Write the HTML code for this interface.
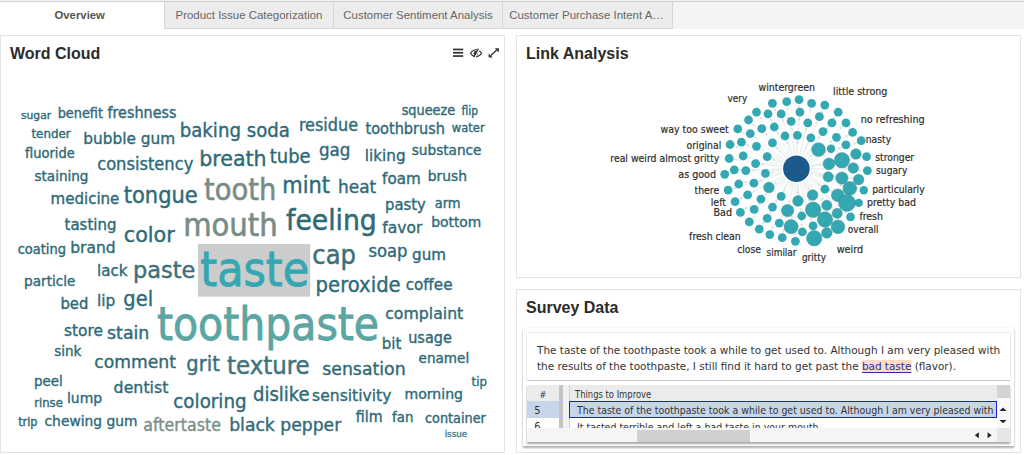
<!DOCTYPE html>
<html lang="en">
<head>
<meta charset="utf-8">
<title>Toothpaste Survey Text Analytics</title>
<style>
html,body{margin:0;padding:0}
body{width:1024px;height:455px;overflow:hidden;background:#fff;position:relative;font-family:"Liberation Sans",sans-serif;color:#333}
.tabbar{position:absolute;left:0;top:0;width:1024px;height:29px;background:#f4f4f4;box-sizing:border-box;border-top:1px solid #f0f0f0}
.tabbar:before{content:"";position:absolute;left:0;top:0;width:1024px;height:1px;background:#d2d2d2}
.tab{position:absolute;top:1px;height:27px;box-sizing:border-box;background:#ececec;border:1px solid #d6d6d6;border-top:none;border-left:none;font-size:11.45px;line-height:27px;text-align:center;color:#666;white-space:nowrap;overflow:hidden}
.tab span{position:relative;top:0.3px}
.tab.active{background:#fff;border:none;height:34px;font-weight:bold;color:#555;font-size:11.35px}
.panel{position:absolute;box-sizing:border-box;border:1px solid #e4e4e4;background:#fff}
.panel h2{position:absolute;margin:0;left:8px;top:8px;font-size:16px;line-height:20px;font-weight:bold;color:#2b2b2b;white-space:nowrap}
svg{position:absolute;left:0;top:0;overflow:visible}
svg text{font-family:"DejaVu Sans Condensed","DejaVu Sans","Liberation Sans",sans-serif}
.tools{position:absolute;left:0;top:0}
.sv{font-family:"DejaVu Sans Condensed","DejaVu Sans","Liberation Sans",sans-serif;color:#333}
.outer{position:absolute;left:523px;top:328px;width:491px;height:118px;background:#fff;box-shadow:0 1.5px 2px rgba(0,0,0,.32),0 0 1px rgba(0,0,0,.15)}
.note{position:absolute;left:527px;top:333px;width:483px;height:47px;background:#fff;box-shadow:0 1px 0 #c9c9c9,0 0 1.5px rgba(0,0,0,.28);box-sizing:border-box}
.note p{position:absolute;margin:0;left:9.5px;white-space:nowrap;font-size:11.25px;line-height:16px;transform-origin:0 0;transform:scaleX(1.035)}
.hl{background:linear-gradient(#fddcc0,#fddcc0) no-repeat 0 0/100% 12px;color:#2c2cac;text-decoration:underline;text-decoration-thickness:1.1px;text-underline-offset:1.6px}
.grid{position:absolute;left:527px;top:385px;width:483px;height:57px;background:#fff;box-shadow:0 1.5px 2px rgba(0,0,0,.35);overflow:hidden}
.grid div{position:absolute;box-sizing:border-box}
.grid .t{white-space:nowrap;transform-origin:0 0}
</style>
</head>
<body>
<div class="tabbar">
  <div class="tab active" style="left:0;width:164px"><span style="left:-2.3px;top:-0.4px">Overview</span></div>
  <div class="tab" style="left:164px;width:170px;border-left:1px solid #d6d6d6"><span>Product Issue Categorization</span></div>
  <div class="tab" style="left:334px;width:169px"><span>Customer Sentiment Analysis</span></div>
  <div class="tab" style="left:503px;width:170px"><span style="left:-1px">Customer Purchase Intent A…</span></div>
</div>

<div class="panel" style="left:0;top:35px;width:505px;height:418px"><h2 style="left:9px">Word Cloud</h2></div>
<div class="panel" style="left:516px;top:35px;width:505px;height:243px"><h2 style="left:9px">Link Analysis</h2></div>
<div class="panel" style="left:516px;top:289px;width:505px;height:164px"><h2 style="left:9px">Survey Data</h2></div>

<svg class="tools" width="1024" height="70" viewBox="0 0 1024 70">
  <g fill="#333">
    <rect x="453" y="48.6" width="10.2" height="1.7"/>
    <rect x="453" y="51.9" width="10.2" height="1.7"/>
    <rect x="453" y="55.2" width="10.2" height="1.7"/>
  </g>
  <g fill="none" stroke="#333" stroke-width="1.05">
    <path d="M470.5 53.2 C472.6 50 474.6 49.7 476 49.7 C477.6 49.7 479.6 50.2 481.6 53.2 C479.6 56.2 477.6 56.7 476 56.7 C474.6 56.7 472.6 56.4 470.5 53.2Z"/>
  </g>
  <circle cx="475.8" cy="53.2" r="2.2" fill="#333"/>
  <path d="M479.6 48.9 L474.9 57.6" stroke="#fff" stroke-width="1.1" fill="none"/>
  <path d="M478.4 48.6 L473.7 57.3" stroke="#333" stroke-width="1.1" fill="none"/>
  <g fill="#333" stroke="#333">
    <path d="M490.8 55.6 L496.7 50.1" stroke-width="1.35" fill="none"/>
    <path d="M494.7 48.2 H498.9 V52.4Z" stroke="none"/>
    <path d="M488.6 53.4 V57.6 H492.8Z" stroke="none"/>
  </g>
</svg>

<svg width="1024" height="455" viewBox="0 0 1024 455">
  <rect x="198" y="244" width="112.2" height="52.6" fill="#cccccc"/>
  <g stroke-width="0.3">
<text stroke="#2f6a78" x="20.95" y="119.10" font-size="11.37" textLength="30.29" lengthAdjust="spacingAndGlyphs" fill="#2f6a78" stroke-width="0.36">sugar</text>
<text stroke="#2f6a78" x="57.68" y="118.30" font-size="13.60" textLength="45.36" lengthAdjust="spacingAndGlyphs" fill="#2f6a78" stroke-width="0.36">benefit</text>
<text stroke="#2f6a78" x="107.51" y="117.50" font-size="15.20" textLength="69.08" lengthAdjust="spacingAndGlyphs" fill="#2f6a78" stroke-width="0.36">freshness</text>
<text stroke="#2f6a78" x="401.66" y="115.10" font-size="13.59" textLength="53.54" lengthAdjust="spacingAndGlyphs" fill="#2f6a78" stroke-width="0.36">squeeze</text>
<text stroke="#2f6a78" x="461.49" y="114.90" font-size="12.10" textLength="16.47" lengthAdjust="spacingAndGlyphs" fill="#2f6a78" stroke-width="0.36">flip</text>
<text stroke="#2f6a78" x="31.47" y="138.00" font-size="12.52" textLength="39.17" lengthAdjust="spacingAndGlyphs" fill="#2f6a78" stroke-width="0.36">tender</text>
<text stroke="#2f6a78" x="83.37" y="143.80" font-size="16.18" textLength="91.83" lengthAdjust="spacingAndGlyphs" fill="#2f6a78" stroke-width="0.36">bubble gum</text>
<text stroke="#2f6a78" x="179.72" y="136.80" font-size="19.16" textLength="110.19" lengthAdjust="spacingAndGlyphs" fill="#2f6a78" stroke-width="0.36">baking soda</text>
<text stroke="#2f6a78" x="298.90" y="131.40" font-size="16.95" textLength="59.15" lengthAdjust="spacingAndGlyphs" fill="#2f6a78" stroke-width="0.36">residue</text>
<text stroke="#2f6a78" x="365.51" y="134.30" font-size="15.33" textLength="79.50" lengthAdjust="spacingAndGlyphs" fill="#2f6a78" stroke-width="0.36">toothbrush</text>
<text stroke="#2f6a78" x="451.84" y="131.80" font-size="12.19" textLength="32.89" lengthAdjust="spacingAndGlyphs" fill="#2f6a78" stroke-width="0.36">water</text>
<text stroke="#2f6a78" x="25.04" y="158.00" font-size="13.77" textLength="49.76" lengthAdjust="spacingAndGlyphs" fill="#2f6a78" stroke-width="0.36">fluoride</text>
<text stroke="#2f6a78" x="97.21" y="169.90" font-size="17.20" textLength="96.07" lengthAdjust="spacingAndGlyphs" fill="#2f6a78" stroke-width="0.36">consistency</text>
<text stroke="#2f6a78" x="199.21" y="166.20" font-size="21.74" textLength="67.45" lengthAdjust="spacingAndGlyphs" fill="#2f6a78" stroke-width="0.39">breath</text>
<text stroke="#2f6a78" x="269.73" y="163.20" font-size="18.98" textLength="40.91" lengthAdjust="spacingAndGlyphs" fill="#2f6a78" stroke-width="0.36">tube</text>
<text stroke="#2f6a78" x="318.99" y="156.40" font-size="17.66" textLength="31.50" lengthAdjust="spacingAndGlyphs" fill="#2f6a78" stroke-width="0.36">gag</text>
<text stroke="#2f6a78" x="364.88" y="161.00" font-size="16.05" textLength="40.77" lengthAdjust="spacingAndGlyphs" fill="#2f6a78" stroke-width="0.36">liking</text>
<text stroke="#2f6a78" x="411.72" y="154.90" font-size="14.41" textLength="69.81" lengthAdjust="spacingAndGlyphs" fill="#2f6a78" stroke-width="0.36">substance</text>
<text stroke="#2f6a78" x="34.43" y="180.60" font-size="14.33" textLength="54.07" lengthAdjust="spacingAndGlyphs" fill="#2f6a78" stroke-width="0.36">staining</text>
<text stroke="#2f6a78" x="50.49" y="204.20" font-size="15.89" textLength="68.91" lengthAdjust="spacingAndGlyphs" fill="#2f6a78" stroke-width="0.36">medicine</text>
<text stroke="#2f6a78" x="123.78" y="202.60" font-size="22.18" textLength="73.99" lengthAdjust="spacingAndGlyphs" fill="#2f6a78" stroke-width="0.40">tongue</text>
<text stroke="#788d85" x="203.91" y="200.20" font-size="29.96" textLength="72.41" lengthAdjust="spacingAndGlyphs" fill="#788d85" stroke-width="0.54">tooth</text>
<text stroke="#2f6a78" x="282.29" y="192.90" font-size="22.14" textLength="47.76" lengthAdjust="spacingAndGlyphs" fill="#2f6a78" stroke-width="0.40">mint</text>
<text stroke="#2f6a78" x="338.02" y="193.10" font-size="17.89" textLength="38.18" lengthAdjust="spacingAndGlyphs" fill="#2f6a78" stroke-width="0.36">heat</text>
<text stroke="#2f6a78" x="382.09" y="183.80" font-size="15.98" textLength="38.59" lengthAdjust="spacingAndGlyphs" fill="#2f6a78" stroke-width="0.36">foam</text>
<text stroke="#2f6a78" x="427.80" y="180.90" font-size="14.62" textLength="39.25" lengthAdjust="spacingAndGlyphs" fill="#2f6a78" stroke-width="0.36">brush</text>
<text stroke="#2f6a78" x="64.60" y="230.20" font-size="15.80" textLength="51.82" lengthAdjust="spacingAndGlyphs" fill="#2f6a78" stroke-width="0.36">tasting</text>
<text stroke="#2f6a78" x="123.72" y="241.50" font-size="21.91" textLength="51.09" lengthAdjust="spacingAndGlyphs" fill="#2f6a78" stroke-width="0.40">color</text>
<text stroke="#788d85" x="183.15" y="236.20" font-size="31.96" textLength="94.59" lengthAdjust="spacingAndGlyphs" fill="#788d85" stroke-width="0.58">mouth</text>
<text stroke="#2f6a78" x="286.02" y="230.20" font-size="28.97" textLength="90.78" lengthAdjust="spacingAndGlyphs" fill="#2f6a78" stroke-width="0.52">feeling</text>
<text stroke="#2f6a78" x="385.01" y="210.00" font-size="15.66" textLength="40.83" lengthAdjust="spacingAndGlyphs" fill="#2f6a78" stroke-width="0.36">pasty</text>
<text stroke="#2f6a78" x="434.70" y="207.50" font-size="13.84" textLength="25.94" lengthAdjust="spacingAndGlyphs" fill="#2f6a78" stroke-width="0.36">arm</text>
<text stroke="#2f6a78" x="382.29" y="232.80" font-size="16.38" textLength="40.01" lengthAdjust="spacingAndGlyphs" fill="#2f6a78" stroke-width="0.36">favor</text>
<text stroke="#2f6a78" x="431.20" y="227.00" font-size="14.63" textLength="50.10" lengthAdjust="spacingAndGlyphs" fill="#2f6a78" stroke-width="0.36">bottom</text>
<text stroke="#2f6a78" x="17.65" y="254.30" font-size="13.76" textLength="48.40" lengthAdjust="spacingAndGlyphs" fill="#2f6a78" stroke-width="0.36">coating</text>
<text stroke="#2f6a78" x="70.25" y="253.30" font-size="16.38" textLength="45.42" lengthAdjust="spacingAndGlyphs" fill="#2f6a78" stroke-width="0.36">brand</text>
<text stroke="#2f6a78" x="96.98" y="275.90" font-size="16.00" textLength="30.60" lengthAdjust="spacingAndGlyphs" fill="#2f6a78" stroke-width="0.36">lack</text>
<text stroke="#3d7079" x="132.97" y="277.50" font-size="23.85" textLength="62.36" lengthAdjust="spacingAndGlyphs" fill="#3d7079" stroke-width="0.43">paste</text>
<text stroke="#35a7b3" x="200.33" y="286.00" font-size="47.73" textLength="108.78" lengthAdjust="spacingAndGlyphs" fill="#35a7b3" stroke-width="0.86">taste</text>
<text stroke="#3d7079" x="312.31" y="264.30" font-size="26.04" textLength="43.62" lengthAdjust="spacingAndGlyphs" fill="#3d7079" stroke-width="0.47">cap</text>
<text stroke="#2f6a78" x="368.40" y="256.50" font-size="17.31" textLength="39.02" lengthAdjust="spacingAndGlyphs" fill="#2f6a78" stroke-width="0.36">soap</text>
<text stroke="#2f6a78" x="412.06" y="259.70" font-size="15.97" textLength="33.93" lengthAdjust="spacingAndGlyphs" fill="#2f6a78" stroke-width="0.36">gum</text>
<text stroke="#2f6a78" x="24.12" y="286.30" font-size="14.37" textLength="51.31" lengthAdjust="spacingAndGlyphs" fill="#2f6a78" stroke-width="0.36">particle</text>
<text stroke="#2f6a78" x="315.59" y="291.70" font-size="20.74" textLength="85.13" lengthAdjust="spacingAndGlyphs" fill="#2f6a78" stroke-width="0.37">peroxide</text>
<text stroke="#2f6a78" x="405.65" y="290.00" font-size="16.06" textLength="46.85" lengthAdjust="spacingAndGlyphs" fill="#2f6a78" stroke-width="0.36">coffee</text>
<text stroke="#2f6a78" x="60.41" y="309.30" font-size="15.62" textLength="27.89" lengthAdjust="spacingAndGlyphs" fill="#2f6a78" stroke-width="0.36">bed</text>
<text stroke="#2f6a78" x="96.95" y="306.00" font-size="16.34" textLength="18.43" lengthAdjust="spacingAndGlyphs" fill="#2f6a78" stroke-width="0.36">lip</text>
<text stroke="#2f6a78" x="123.37" y="305.60" font-size="20.61" textLength="29.83" lengthAdjust="spacingAndGlyphs" fill="#2f6a78" stroke-width="0.37">gel</text>
<text stroke="#5ba6a3" x="156.95" y="339.60" font-size="45.58" textLength="222.18" lengthAdjust="spacingAndGlyphs" fill="#5ba6a3" stroke-width="0.82">toothpaste</text>
<text stroke="#2f6a78" x="385.23" y="319.30" font-size="16.60" textLength="78.06" lengthAdjust="spacingAndGlyphs" fill="#2f6a78" stroke-width="0.36">complaint</text>
<text stroke="#2f6a78" x="64.04" y="335.60" font-size="16.29" textLength="38.98" lengthAdjust="spacingAndGlyphs" fill="#2f6a78" stroke-width="0.36">store</text>
<text stroke="#2f6a78" x="107.06" y="338.50" font-size="18.31" textLength="42.27" lengthAdjust="spacingAndGlyphs" fill="#2f6a78" stroke-width="0.36">stain</text>
<text stroke="#2f6a78" x="381.69" y="348.80" font-size="15.94" textLength="19.69" lengthAdjust="spacingAndGlyphs" fill="#2f6a78" stroke-width="0.36">bit</text>
<text stroke="#2f6a78" x="408.20" y="342.50" font-size="15.28" textLength="43.67" lengthAdjust="spacingAndGlyphs" fill="#2f6a78" stroke-width="0.36">usage</text>
<text stroke="#2f6a78" x="54.23" y="356.00" font-size="14.31" textLength="27.26" lengthAdjust="spacingAndGlyphs" fill="#2f6a78" stroke-width="0.36">sink</text>
<text stroke="#2f6a78" x="94.27" y="368.20" font-size="18.15" textLength="81.64" lengthAdjust="spacingAndGlyphs" fill="#2f6a78" stroke-width="0.36">comment</text>
<text stroke="#38707a" x="186.37" y="371.20" font-size="20.60" textLength="33.47" lengthAdjust="spacingAndGlyphs" fill="#38707a" stroke-width="0.37">grit</text>
<text stroke="#40737b" x="227.06" y="373.60" font-size="24.40" textLength="82.68" lengthAdjust="spacingAndGlyphs" fill="#40737b" stroke-width="0.44">texture</text>
<text stroke="#2f6a78" x="322.26" y="374.80" font-size="18.26" textLength="83.36" lengthAdjust="spacingAndGlyphs" fill="#2f6a78" stroke-width="0.36">sensation</text>
<text stroke="#2f6a78" x="418.63" y="362.90" font-size="14.31" textLength="50.55" lengthAdjust="spacingAndGlyphs" fill="#2f6a78" stroke-width="0.36">enamel</text>
<text stroke="#2f6a78" x="34.04" y="386.00" font-size="14.09" textLength="28.61" lengthAdjust="spacingAndGlyphs" fill="#2f6a78" stroke-width="0.36">peel</text>
<text stroke="#2f6a78" x="113.63" y="392.70" font-size="16.68" textLength="54.76" lengthAdjust="spacingAndGlyphs" fill="#2f6a78" stroke-width="0.36">dentist</text>
<text stroke="#2f6a78" x="471.57" y="386.20" font-size="12.50" textLength="15.45" lengthAdjust="spacingAndGlyphs" fill="#2f6a78" stroke-width="0.36">tip</text>
<text stroke="#2f6a78" x="34.19" y="406.90" font-size="12.30" textLength="28.64" lengthAdjust="spacingAndGlyphs" fill="#2f6a78" stroke-width="0.36">rinse</text>
<text stroke="#2f6a78" x="66.99" y="402.60" font-size="14.71" textLength="35.12" lengthAdjust="spacingAndGlyphs" fill="#2f6a78" stroke-width="0.36">lump</text>
<text stroke="#2f6a78" x="173.32" y="407.50" font-size="19.31" textLength="73.31" lengthAdjust="spacingAndGlyphs" fill="#2f6a78" stroke-width="0.36">coloring</text>
<text stroke="#2f6a78" x="253.13" y="401.20" font-size="18.94" textLength="56.41" lengthAdjust="spacingAndGlyphs" fill="#2f6a78" stroke-width="0.36">dislike</text>
<text stroke="#2f6a78" x="312.14" y="401.40" font-size="16.43" textLength="79.22" lengthAdjust="spacingAndGlyphs" fill="#2f6a78" stroke-width="0.36">sensitivity</text>
<text stroke="#2f6a78" x="404.58" y="399.40" font-size="14.85" textLength="58.46" lengthAdjust="spacingAndGlyphs" fill="#2f6a78" stroke-width="0.36">morning</text>
<text stroke="#2f6a78" x="18.18" y="425.80" font-size="11.88" textLength="19.31" lengthAdjust="spacingAndGlyphs" fill="#2f6a78" stroke-width="0.36">trip</text>
<text stroke="#2f6a78" x="44.52" y="425.50" font-size="14.60" textLength="92.98" lengthAdjust="spacingAndGlyphs" fill="#2f6a78" stroke-width="0.36">chewing gum</text>
<text stroke="#7b9089" x="143.15" y="431.30" font-size="16.78" textLength="77.80" lengthAdjust="spacingAndGlyphs" fill="#7b9089" stroke-width="0.36">aftertaste</text>
<text stroke="#2f6a78" x="229.20" y="430.90" font-size="18.15" textLength="112.07" lengthAdjust="spacingAndGlyphs" fill="#2f6a78" stroke-width="0.36">black pepper</text>
<text stroke="#2f6a78" x="355.71" y="422.30" font-size="15.04" textLength="26.81" lengthAdjust="spacingAndGlyphs" fill="#2f6a78" stroke-width="0.36">film</text>
<text stroke="#2f6a78" x="392.13" y="422.00" font-size="14.06" textLength="21.28" lengthAdjust="spacingAndGlyphs" fill="#2f6a78" stroke-width="0.36">fan</text>
<text stroke="#2f6a78" x="425.06" y="422.90" font-size="13.54" textLength="60.76" lengthAdjust="spacingAndGlyphs" fill="#2f6a78" stroke-width="0.36">container</text>
<text stroke="#44808f" x="444.65" y="436.60" font-size="9.27" textLength="22.55" lengthAdjust="spacingAndGlyphs" fill="#44808f" stroke-width="0.36">issue</text>
  </g>
  <g>
<path d="M796.4 168.7L772.4 103.3M796.4 168.7L786.7 101.7M796.4 168.7L799.1 99.7M796.4 168.7L811.6 103.4M796.4 168.7L824.8 105.1M796.4 168.7L756.5 112.1M796.4 168.7L768.0 113.9M796.4 168.7L781.2 113.9M796.4 168.7L799.9 112.1M796.4 168.7L838.2 112.1M796.4 168.7L819.4 116.7M796.4 168.7L748.5 120.0M796.4 168.7L791.2 121.3M796.4 168.7L807.8 122.9M796.4 168.7L831.9 122.9M796.4 168.7L846.0 122.9M796.4 168.7L737.8 128.9M796.4 168.7L761.8 128.7M796.4 168.7L774.3 127.0M796.4 168.7L750.3 133.6M796.4 168.7L823.0 131.6M796.4 168.7L852.6 132.4M796.4 168.7L785.0 136.0M796.4 168.7L797.4 135.3M796.4 168.7L810.8 137.8M796.4 168.7L836.5 137.3M796.4 168.7L741.4 142.2M796.4 168.7L730.1 144.5M796.4 168.7L772.5 142.9M796.4 168.7L756.5 146.3M796.4 168.7L861.2 140.7M796.4 168.7L845.9 144.8M796.4 168.7L818.5 149.6M796.4 168.7L831.0 148.7M796.4 168.7L855.9 154.0M796.4 168.7L866.6 156.7M796.4 168.7L841.9 160.3M796.4 168.7L828.9 163.8M796.4 168.7L853.3 168.0M796.4 168.7L867.4 170.6M796.4 168.7L828.2 176.9M796.4 168.7L841.9 178.1M796.4 168.7L858.6 179.6M796.4 168.7L849.8 188.4M796.4 168.7L824.9 189.2M796.4 168.7L863.8 190.2M796.4 168.7L837.8 195.3M796.4 168.7L812.6 195.0M796.4 168.7L729.2 158.5M796.4 168.7L743.2 155.9M796.4 168.7L767.2 156.7M796.4 168.7L755.6 163.6M796.4 168.7L734.3 169.8M796.4 168.7L745.8 170.6M796.4 168.7L724.7 174.3M796.4 168.7L765.4 173.3M796.4 168.7L738.7 184.0M796.4 168.7L753.9 183.2M796.4 168.7L768.9 187.4M796.4 168.7L728.1 190.1M796.4 168.7L747.6 194.9M796.4 168.7L735.1 201.7M796.4 168.7L760.9 199.1M796.4 168.7L781.2 196.4M796.4 168.7L798.0 200.9M796.4 168.7L754.1 209.4M796.4 168.7L772.5 207.1M796.4 168.7L787.6 210.6M796.4 168.7L740.4 212.4M796.4 168.7L801.7 216.0M796.4 168.7L767.2 218.3M796.4 168.7L749.3 221.9M796.4 168.7L779.3 223.1M796.4 168.7L791.1 226.7M796.4 168.7L759.3 229.1M796.4 168.7L802.4 231.9M796.4 168.7L769.8 234.6M796.4 168.7L782.2 237.7M796.4 168.7L795.4 241.3M796.4 168.7L858.8 202.9M796.4 168.7L826.8 205.3M796.4 168.7L813.1 209.8M796.4 168.7L837.2 213.4M796.4 168.7L850.5 216.9M796.4 168.7L825.0 219.5M796.4 168.7L813.1 225.8M796.4 168.7L838.0 226.8M796.4 168.7L826.8 232.9M796.4 168.7L814.2 238.3M796.4 168.7L847.0 202.9" stroke="#e1e9eb" stroke-width="0.6" fill="none"/>
<path d="M774.1 107.9L776.4 110.5L774.0 111.4ZM787.4 106.5L789.1 109.5L786.6 109.9ZM798.9 104.6L800.1 107.8L797.5 107.7ZM810.5 108.2L811.0 111.6L808.5 111.0ZM822.8 109.6L822.7 113.0L820.3 112.0ZM759.3 116.1L762.2 118.0L760.1 119.5ZM770.3 118.3L772.9 120.5L770.6 121.7ZM782.5 118.6L784.6 121.4L782.1 122.1ZM799.6 117.0L800.7 120.3L798.1 120.1ZM835.3 116.0L834.4 119.4L832.3 117.8ZM817.4 121.2L817.3 124.6L814.9 123.6ZM751.9 123.5L755.1 124.9L753.3 126.7ZM791.7 126.2L793.4 129.2L790.8 129.5ZM806.6 127.7L807.1 131.1L804.6 130.4ZM828.9 126.8L828.0 130.1L825.9 128.5ZM842.4 126.2L840.9 129.4L839.2 127.4ZM741.9 131.7L745.2 132.4L743.8 134.5ZM765.0 132.4L768.1 134.0L766.1 135.7ZM776.6 131.3L779.2 133.5L776.9 134.8ZM754.2 136.6L757.5 137.5L756.0 139.5ZM820.1 135.6L819.3 138.9L817.2 137.4ZM848.5 135.1L846.5 137.9L845.1 135.7ZM786.6 140.6L788.9 143.2L786.4 144.1ZM797.3 140.2L798.5 143.4L795.9 143.4ZM808.7 142.2L808.6 145.7L806.2 144.6ZM832.6 140.3L830.9 143.3L829.3 141.3ZM745.8 144.3L749.3 144.5L748.1 146.9ZM734.7 146.2L738.2 146.1L737.3 148.5ZM775.8 146.5L779.0 148.0L777.1 149.7ZM760.8 148.7L764.2 149.1L762.9 151.4ZM856.7 142.6L854.3 145.1L853.2 142.7ZM841.5 146.9L839.2 149.5L838.0 147.2ZM812.9 154.4L811.3 157.5L809.6 155.5ZM826.9 151.1L824.8 153.8L823.5 151.5ZM850.3 155.4L847.5 157.4L846.9 154.9ZM861.8 157.5L858.8 159.3L858.4 156.8ZM833.8 161.8L830.9 163.6L830.5 161.1ZM822.6 164.8L819.6 166.5L819.2 163.9ZM847.5 168.1L844.3 169.4L844.3 166.8ZM862.5 170.5L859.3 171.7L859.3 169.1ZM822.8 175.5L819.4 176.0L820.0 173.4ZM835.3 176.7L831.9 177.4L832.5 174.8ZM852.9 178.6L849.5 179.3L850.0 176.8ZM842.9 185.8L839.4 186.0L840.3 183.5ZM820.9 186.3L817.6 185.5L819.1 183.4ZM859.3 188.8L855.9 189.0L856.7 186.6ZM832.0 191.6L828.6 190.9L830.0 188.7ZM809.6 190.1L806.8 188.0L809.0 186.7ZM734.0 159.2L737.4 158.4L737.0 161.0ZM748.0 157.0L751.4 156.5L750.8 159.1ZM771.7 158.6L775.2 158.6L774.2 161.0ZM760.5 164.2L763.8 163.3L763.5 165.9ZM739.2 169.7L742.4 168.4L742.4 171.0ZM750.7 170.4L753.8 169.0L753.9 171.6ZM729.6 173.9L732.7 172.4L732.9 175.0ZM770.2 172.6L773.2 170.8L773.6 173.4ZM743.4 182.7L746.2 180.7L746.9 183.2ZM758.5 181.6L761.1 179.4L762.0 181.8ZM773.7 184.1L775.6 181.3L777.1 183.4ZM732.8 188.6L735.4 186.4L736.2 188.9ZM751.9 192.6L754.1 189.9L755.4 192.2ZM739.4 199.4L741.6 196.7L742.8 199.0ZM764.6 195.9L766.2 192.8L767.9 194.8ZM783.6 192.1L784.0 188.7L786.2 189.9ZM797.7 195.1L796.3 192.0L798.9 191.8ZM757.6 206.0L759.0 202.8L760.8 204.7ZM775.1 202.9L775.7 199.5L777.9 200.9ZM789.0 204.0L788.4 200.6L790.9 201.2ZM744.3 209.4L746.0 206.4L747.6 208.4ZM801.2 211.1L799.5 208.1L802.1 207.8ZM769.7 214.1L770.2 210.7L772.4 212.0ZM752.5 218.2L753.7 215.0L755.6 216.7ZM780.8 218.4L780.5 215.0L783.0 215.8ZM791.8 219.1L790.8 215.8L793.4 216.1ZM761.9 224.9L762.4 221.5L764.6 222.9ZM801.9 227.0L800.3 224.0L802.9 223.7ZM771.6 230.1L771.6 226.6L774.0 227.6ZM783.2 232.9L782.6 229.5L785.1 230.0ZM795.5 236.4L794.2 233.2L796.8 233.2ZM854.7 200.6L851.2 200.2L852.5 198.0ZM823.2 201.0L820.2 199.4L822.2 197.7ZM810.0 202.2L807.6 199.7L810.0 198.7ZM833.4 209.3L830.3 207.8L832.2 206.0ZM846.8 213.6L843.6 212.5L845.3 210.5ZM821.0 212.4L818.3 210.2L820.5 208.9ZM811.7 221.1L809.6 218.4L812.1 217.7ZM833.7 220.8L830.8 218.9L832.9 217.4ZM824.3 227.7L821.8 225.3L824.1 224.2ZM812.2 230.4L810.1 227.6L812.6 226.9ZM839.5 197.9L836.2 197.1L837.6 195.0Z" fill="#d6e0e3"/>
  </g>
  <g fill="#34a8b2">
<circle cx="772.4" cy="103.3" r="4.4"/>
<circle cx="786.7" cy="101.7" r="4.4"/>
<circle cx="799.1" cy="99.7" r="4.4"/>
<circle cx="811.6" cy="103.39999999999999" r="4.4"/>
<circle cx="824.8" cy="105.1" r="4.4"/>
<circle cx="756.5" cy="112.1" r="4.4"/>
<circle cx="768" cy="113.89999999999999" r="4.4"/>
<circle cx="781.2" cy="113.89999999999999" r="4.4"/>
<circle cx="799.9" cy="112.1" r="4.4"/>
<circle cx="838.2" cy="112.1" r="4.4"/>
<circle cx="819.4" cy="116.7" r="4.4"/>
<circle cx="748.5" cy="120.0" r="4.4"/>
<circle cx="791.2" cy="121.3" r="4.4"/>
<circle cx="807.8" cy="122.89999999999999" r="4.4"/>
<circle cx="831.9" cy="122.89999999999999" r="4.4"/>
<circle cx="846" cy="122.89999999999999" r="4.4"/>
<circle cx="737.8" cy="128.9" r="4.4"/>
<circle cx="761.8" cy="128.70000000000002" r="4.4"/>
<circle cx="774.3" cy="127.0" r="4.4"/>
<circle cx="750.3" cy="133.60000000000002" r="4.4"/>
<circle cx="823" cy="131.60000000000002" r="4.4"/>
<circle cx="852.6" cy="132.4" r="4.4"/>
<circle cx="785" cy="136.0" r="4.4"/>
<circle cx="797.4" cy="135.3" r="4.4"/>
<circle cx="810.8" cy="137.8" r="4.4"/>
<circle cx="836.5" cy="137.3" r="4.4"/>
<circle cx="741.4" cy="142.20000000000002" r="4.4"/>
<circle cx="730.1" cy="144.5" r="4.4"/>
<circle cx="772.5" cy="142.9" r="4.4"/>
<circle cx="756.5" cy="146.3" r="4.4"/>
<circle cx="861.2" cy="140.70000000000002" r="4.4"/>
<circle cx="845.9" cy="144.8" r="4.4"/>
<circle cx="818.5" cy="149.60000000000002" r="6.9" stroke="#4a8e96" stroke-width="0.5"/>
<circle cx="831" cy="148.70000000000002" r="4.2"/>
<circle cx="855.9" cy="154.0" r="5.3" stroke="#4a8e96" stroke-width="0.5"/>
<circle cx="866.6" cy="156.70000000000002" r="4.4"/>
<circle cx="841.9" cy="160.3" r="7.7" stroke="#4a8e96" stroke-width="0.5"/>
<circle cx="828.9" cy="163.8" r="5.9" stroke="#4a8e96" stroke-width="0.5"/>
<circle cx="853.3" cy="168.0" r="5.3" stroke="#4a8e96" stroke-width="0.5"/>
<circle cx="867.4" cy="170.60000000000002" r="4.4"/>
<circle cx="828.2" cy="176.9" r="5.1" stroke="#4a8e96" stroke-width="0.5"/>
<circle cx="841.9" cy="178.10000000000002" r="6.2" stroke="#4a8e96" stroke-width="0.5"/>
<circle cx="858.6" cy="179.60000000000002" r="5.3" stroke="#4a8e96" stroke-width="0.5"/>
<circle cx="849.8" cy="188.4" r="6.9" stroke="#4a8e96" stroke-width="0.5"/>
<circle cx="824.9" cy="189.20000000000002" r="4.4"/>
<circle cx="863.8" cy="190.20000000000002" r="4.2"/>
<circle cx="837.8" cy="195.3" r="6.4" stroke="#4a8e96" stroke-width="0.5"/>
<circle cx="812.6" cy="195.0" r="5.3" stroke="#4a8e96" stroke-width="0.5"/>
<circle cx="729.2" cy="158.5" r="4.4"/>
<circle cx="743.2" cy="155.9" r="4.4"/>
<circle cx="767.2" cy="156.70000000000002" r="4.4"/>
<circle cx="755.6" cy="163.60000000000002" r="4.4"/>
<circle cx="734.3" cy="169.8" r="4.4"/>
<circle cx="745.8" cy="170.60000000000002" r="4.4"/>
<circle cx="724.7" cy="174.3" r="4.4"/>
<circle cx="765.4" cy="173.3" r="4.4"/>
<circle cx="738.7" cy="184.0" r="4.4"/>
<circle cx="753.9" cy="183.20000000000002" r="4.4"/>
<circle cx="768.9" cy="187.4" r="5.3" stroke="#4a8e96" stroke-width="0.5"/>
<circle cx="728.1" cy="190.10000000000002" r="4.4"/>
<circle cx="747.6" cy="194.9" r="4.4"/>
<circle cx="735.1" cy="201.70000000000002" r="4.4"/>
<circle cx="760.9" cy="199.10000000000002" r="4.4"/>
<circle cx="781.2" cy="196.4" r="4.4"/>
<circle cx="798" cy="200.9" r="5.3" stroke="#4a8e96" stroke-width="0.5"/>
<circle cx="754.1" cy="209.4" r="4.4"/>
<circle cx="772.5" cy="207.10000000000002" r="4.4"/>
<circle cx="787.6" cy="210.60000000000002" r="6.2" stroke="#4a8e96" stroke-width="0.5"/>
<circle cx="740.4" cy="212.4" r="4.4"/>
<circle cx="801.7" cy="216.0" r="4.4"/>
<circle cx="767.2" cy="218.3" r="4.4"/>
<circle cx="749.3" cy="221.9" r="4.4"/>
<circle cx="779.3" cy="223.10000000000002" r="4.4"/>
<circle cx="791.1" cy="226.70000000000002" r="7.1" stroke="#4a8e96" stroke-width="0.5"/>
<circle cx="759.3" cy="229.10000000000002" r="4.4"/>
<circle cx="802.4" cy="231.9" r="4.4"/>
<circle cx="769.8" cy="234.60000000000002" r="4.4"/>
<circle cx="782.2" cy="237.70000000000002" r="4.4"/>
<circle cx="795.4" cy="241.3" r="4.4"/>
<circle cx="858.8" cy="202.9" r="4.2"/>
<circle cx="826.8" cy="205.3" r="5.1" stroke="#4a8e96" stroke-width="0.5"/>
<circle cx="813.1" cy="209.8" r="7.7" stroke="#4a8e96" stroke-width="0.5"/>
<circle cx="837.2" cy="213.4" r="5.1" stroke="#4a8e96" stroke-width="0.5"/>
<circle cx="850.5" cy="216.9" r="4.4"/>
<circle cx="825" cy="219.5" r="7.7" stroke="#4a8e96" stroke-width="0.5"/>
<circle cx="813.1" cy="225.8" r="4.4"/>
<circle cx="838" cy="226.8" r="6.9" stroke="#4a8e96" stroke-width="0.5"/>
<circle cx="826.8" cy="232.9" r="5.3" stroke="#4a8e96" stroke-width="0.5"/>
<circle cx="814.2" cy="238.3" r="7.7" stroke="#4a8e96" stroke-width="0.5"/>
<circle cx="847" cy="202.9" r="8.5" stroke="#3b5c78" stroke-width="0.6" stroke-dasharray="1.2 1"/>
  </g>
  <circle cx="796.4" cy="168.7" r="14.6" fill="#ffffff"/><circle cx="796.4" cy="168.7" r="13.3" fill="#1b5a8b"/>
  <g stroke="#2e2e2e" stroke-width="0.2">
<text x="758.49" y="91.10" font-size="10.7" textLength="56.45" lengthAdjust="spacingAndGlyphs" fill="#2e2e2e">wintergreen</text>
<text x="833.06" y="95.10" font-size="10.7" textLength="54.20" lengthAdjust="spacingAndGlyphs" fill="#2e2e2e">little strong</text>
<text x="727.50" y="102.20" font-size="10.7" textLength="19.72" lengthAdjust="spacingAndGlyphs" fill="#2e2e2e">very</text>
<text x="860.74" y="122.60" font-size="10.7" textLength="63.93" lengthAdjust="spacingAndGlyphs" fill="#2e2e2e">no refreshing</text>
<text x="660.59" y="132.90" font-size="10.7" textLength="68.04" lengthAdjust="spacingAndGlyphs" fill="#2e2e2e">way too sweet</text>
<text x="865.78" y="142.80" font-size="10.7" textLength="25.35" lengthAdjust="spacingAndGlyphs" fill="#2e2e2e">nasty</text>
<text x="686.59" y="148.90" font-size="10.7" textLength="34.64" lengthAdjust="spacingAndGlyphs" fill="#2e2e2e">original</text>
<text x="610.27" y="162.40" font-size="10.7" textLength="109.06" lengthAdjust="spacingAndGlyphs" fill="#2e2e2e">real weird almost gritty</text>
<text x="875.29" y="160.60" font-size="10.7" textLength="38.90" lengthAdjust="spacingAndGlyphs" fill="#2e2e2e">stronger</text>
<text x="876.09" y="174.30" font-size="10.7" textLength="31.23" lengthAdjust="spacingAndGlyphs" fill="#2e2e2e">sugary</text>
<text x="678.27" y="178.30" font-size="10.7" textLength="37.80" lengthAdjust="spacingAndGlyphs" fill="#2e2e2e">as good</text>
<text x="872.18" y="193.20" font-size="10.7" textLength="52.45" lengthAdjust="spacingAndGlyphs" fill="#2e2e2e">particularly</text>
<text x="694.59" y="194.20" font-size="10.7" textLength="24.56" lengthAdjust="spacingAndGlyphs" fill="#2e2e2e">there</text>
<text x="710.77" y="205.60" font-size="10.7" textLength="15.16" lengthAdjust="spacingAndGlyphs" fill="#2e2e2e">left</text>
<text x="866.96" y="206.40" font-size="10.7" textLength="48.98" lengthAdjust="spacingAndGlyphs" fill="#2e2e2e">pretty bad</text>
<text x="713.55" y="216.00" font-size="10.7" textLength="18.52" lengthAdjust="spacingAndGlyphs" fill="#2e2e2e">Bad</text>
<text x="859.39" y="220.40" font-size="10.7" textLength="23.54" lengthAdjust="spacingAndGlyphs" fill="#2e2e2e">fresh</text>
<text x="847.80" y="233.00" font-size="10.7" textLength="30.71" lengthAdjust="spacingAndGlyphs" fill="#2e2e2e">overall</text>
<text x="689.09" y="240.20" font-size="10.7" textLength="51.74" lengthAdjust="spacingAndGlyphs" fill="#2e2e2e">fresh clean</text>
<text x="737.19" y="252.80" font-size="10.7" textLength="23.76" lengthAdjust="spacingAndGlyphs" fill="#2e2e2e">close</text>
<text x="836.68" y="252.60" font-size="10.7" textLength="26.39" lengthAdjust="spacingAndGlyphs" fill="#2e2e2e">weird</text>
<text x="766.60" y="256.20" font-size="10.7" textLength="29.89" lengthAdjust="spacingAndGlyphs" fill="#2e2e2e">similar</text>
<text x="801.90" y="260.80" font-size="10.7" textLength="24.12" lengthAdjust="spacingAndGlyphs" fill="#2e2e2e">gritty</text>
  </g>
</svg>

<div class="outer"></div>
<div class="note sv">
  <p style="top:10.1px" id="l1">The taste of the toothpaste took a while to get used to. Although I am very pleased with</p>
  <p style="top:26.2px;transform:scaleX(1.032)" id="l2">the results of the toothpaste, I still find it hard to get past the <span class="hl">bad taste</span> (flavor).</p>
</div>
<div class="grid sv">
  <div style="left:0;top:0;width:470px;height:16px;background:#ebebeb"></div>
  <div style="left:470px;top:0;width:13px;height:13px;background:#d3d3d3"></div>
  <div style="left:0;top:16px;width:470px;height:17px;background:#c6d6e8"></div>
  <div style="left:32px;top:0;width:4px;height:43px;background:#c4c4c4"></div>
  <div style="left:36px;top:0;width:6px;height:43px;background:#f1f1f1"></div>
  <div style="left:42px;top:0;width:1px;height:43px;background:#d0d0d0"></div>
  <div style="left:42px;top:16px;width:428px;height:17px;border:1.7px solid #1e1ee8;background:#c6d6e8"></div>
  <div class="t" style="left:0;top:3.6px;width:32px;text-align:center;font-size:9px;line-height:12px">#</div>
  <div class="t" id="th" style="left:48px;top:3.5px;font-size:9.7px;line-height:12px;transform:scaleX(.965)">Things to Improve</div>
  <div class="t" style="left:7.3px;top:19px;font-size:11px;line-height:14px">5</div>
  <div class="t" id="r5" style="left:50px;top:18px;font-size:10.6px;line-height:14px;transform:scaleX(.988)">The taste of the toothpaste took a while to get used to. Although I am very pleased with</div>
  <div class="t" style="left:7.3px;top:35px;font-size:11px;line-height:14px">6</div>
  <div class="t" id="r6" style="left:50px;top:35px;font-size:10.6px;line-height:14px;transform:scaleX(.991)">It tasted terrible and left a bad taste in your mouth</div>
  <div style="left:0;top:43px;width:483px;height:14px;background:#f5f5f5"></div>
  <div style="left:110px;top:44.5px;width:113px;height:12.5px;background:#d0d0d0"></div>
  <div style="left:470px;top:43px;width:13px;height:14px;background:#e6e6e6"></div>
  <div style="left:470px;top:13px;width:13px;height:30px;background:#fafafa"></div>
  <svg width="483" height="57" viewBox="0 0 483 57"><g fill="#222">
    <path d="M472.5 26 L476 22.4 L479.5 26Z"/>
    <path d="M472.5 35 L476 38.2 L479.5 35Z"/>
    <path d="M451.8 50.2 L447.8 47.2 L447.8 53.2Z" transform="rotate(180 449.8 50.2)"/>
    <path d="M464.6 50.2 L460.6 47.2 L460.6 53.2Z"/>
  </g></svg>
</div>
</body>
</html>
